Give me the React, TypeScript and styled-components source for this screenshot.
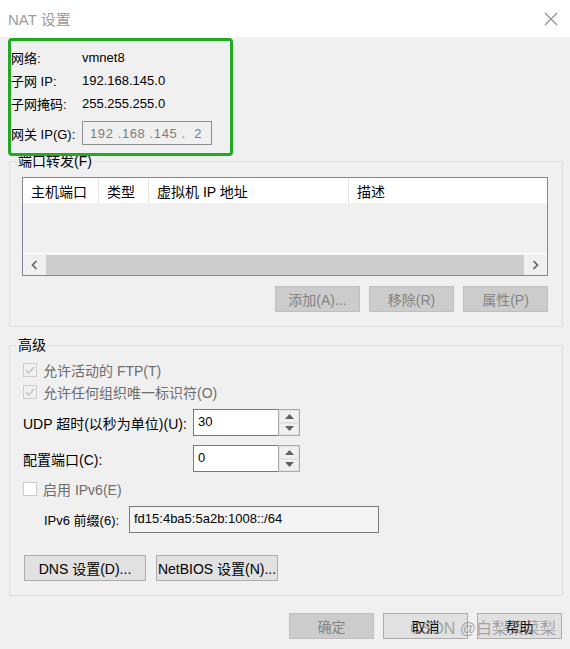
import React from 'react';
import styled, {createGlobalStyle} from 'styled-components';

const GlobalStyle = createGlobalStyle`
    html, body {
        margin: 0;
        padding: 0;
    }
    body {
        font-family: "Liberation Sans", "Noto Sans CJK SC", sans-serif;
        font-size: 13px;
        color: #000;
    }
`;

const columns = [
    {title: '主机端口', width: 76},
    {title: '类型', width: 50},
    {title: '虚拟机 IP 地址', width: 200},
    {title: '描述', width: 0},
];

const App = () => {
    return (
        <Window>
            <GlobalStyle/>
            <TitleBar>
                <Title>{'NAT 设置'}</Title>
                <CloseIcon width='14' height='14' viewBox='0 0 14 14'>
                    <path d='M1 1L13 13M13 1L1 13' stroke='#8a8a8a' strokeWidth='1.1'/>
                </CloseIcon>
            </TitleBar>
            <Body>
                <InfoSection>
                    <InfoRow>
                        <InfoLabel>{'网络:'}</InfoLabel>
                        <InfoValue>{'vmnet8'}</InfoValue>
                    </InfoRow>
                    <InfoRow>
                        <InfoLabel>{'子网 IP:'}</InfoLabel>
                        <InfoValue>{'192.168.145.0'}</InfoValue>
                    </InfoRow>
                    <InfoRow>
                        <InfoLabel>{'子网掩码:'}</InfoLabel>
                        <InfoValue>{'255.255.255.0'}</InfoValue>
                    </InfoRow>
                    <GatewayRow>
                        <InfoLabel>{'网关 IP(G):'}</InfoLabel>
                        <IpBox>{'192 .168 .145 .  2'}</IpBox>
                    </GatewayRow>
                </InfoSection>

                <Group $top={8}>
                    <Legend>{'端口转发(F)'}</Legend>
                    <GroupInner>
                        <Table>
                            <TableHeader>
                                {columns.map((c) => (
                                    <HeaderCell
                                        key={c.title}
                                        $width={c.width}
                                    >
                                        {c.title}
                                    </HeaderCell>
                                ))}
                            </TableHeader>
                            <TableBody/>
                            <HScroll>
                                <ScrollArrow>
                                    <svg width='7' height='10' viewBox='0 0 7 10'>
                                        <path d='M5.5 1L1.5 5L5.5 9' stroke='#606060' strokeWidth='1.6' fill='none'/>
                                    </svg>
                                </ScrollArrow>
                                <ScrollThumb/>
                                <ScrollArrow>
                                    <svg width='7' height='10' viewBox='0 0 7 10'>
                                        <path d='M1.5 1L5.5 5L1.5 9' stroke='#606060' strokeWidth='1.6' fill='none'/>
                                    </svg>
                                </ScrollArrow>
                            </HScroll>
                        </Table>
                        <ButtonRow>
                            <Button $disabled={true}>{'添加(A)...'}</Button>
                            <Button $disabled={true}>{'移除(R)'}</Button>
                            <Button $disabled={true}>{'属性(P)'}</Button>
                        </ButtonRow>
                    </GroupInner>
                </Group>

                <Group $top={10}>
                    <Legend>{'高级'}</Legend>
                    <GroupInner $left={13}>
                        <CheckRow>
                            <CheckBox $checked={true}>
                                <CheckMark/>
                            </CheckBox>
                            <CheckLabel>{'允许活动的 FTP(T)'}</CheckLabel>
                        </CheckRow>
                        <CheckRow>
                            <CheckBox $checked={true}>
                                <CheckMark/>
                            </CheckBox>
                            <CheckLabel>{'允许任何组织唯一标识符(O)'}</CheckLabel>
                        </CheckRow>
                        <FieldRow $top={6}>
                            <FieldLabel>{'UDP 超时(以秒为单位)(U):'}</FieldLabel>
                            <SpinBox value='30'/>
                        </FieldRow>
                        <FieldRow $top={9}>
                            <FieldLabel>{'配置端口(C):'}</FieldLabel>
                            <SpinBox value='0'/>
                        </FieldRow>
                        <CheckRow $top={6}>
                            <CheckBox $checked={false}/>
                            <CheckLabel>{'启用 IPv6(E)'}</CheckLabel>
                        </CheckRow>
                        <PrefixRow>
                            <PrefixLabel>{'IPv6 前缀(6):'}</PrefixLabel>
                            <PrefixInput>{'fd15:4ba5:5a2b:1008::/64'}</PrefixInput>
                        </PrefixRow>
                        <SettingsRow>
                            <Button $width={122}>{'DNS 设置(D)...'}</Button>
                            <Button $width={122}>{'NetBIOS 设置(N)...'}</Button>
                        </SettingsRow>
                    </GroupInner>
                </Group>

                <Footer>
                    <Button $disabled={true}>{'确定'}</Button>
                    <Button>{'取消'}</Button>
                    <Button>{'帮助'}</Button>
                </Footer>

                <Highlight/>
                <Watermark>{'CSDN @白梨菜菜梨'}</Watermark>
            </Body>
        </Window>
    );
};

const CheckMark = () => (
    <svg width='12' height='12' viewBox='0 0 12 12'>
        <path d='M2 6.2L4.8 9L10 3' stroke='#c4c4c4' strokeWidth='1.4' fill='none'/>
    </svg>
);

const SpinBox = ({value}: {value: string}) => (
    <Spin>
        <SpinInput>{value}</SpinInput>
        <SpinButtons>
            <SpinButton>
                <svg width='9' height='5' viewBox='0 0 9 5'>
                    <path d='M0 5L4.5 0L9 5Z' fill='#606060'/>
                </svg>
            </SpinButton>
            <SpinButton>
                <svg width='9' height='5' viewBox='0 0 9 5'>
                    <path d='M0 0L4.5 5L9 0Z' fill='#606060'/>
                </svg>
            </SpinButton>
        </SpinButtons>
    </Spin>
);

const Window = styled.div`
    width: 570px;
    height: 649px;
    display: flex;
    flex-direction: column;
    overflow: hidden;
`;

const TitleBar = styled.div`
    height: 37px;
    flex-shrink: 0;
    background: #fff;
    display: flex;
    align-items: center;
    justify-content: space-between;
    padding: 0 12px 0 8px;
    box-sizing: border-box;
`;

const Title = styled.div`
    font-size: 15px;
    color: #9c9c9c;
`;

const CloseIcon = styled.svg`
    display: block;
`;

const Body = styled.div`
    flex: 1;
    position: relative;
    background: #f0f0f0;
    display: flex;
    flex-direction: column;
`;

const InfoSection = styled.div`
    padding: 9px 0 0 11px;
    display: flex;
    flex-direction: column;
`;

const InfoRow = styled.div`
    height: 23px;
    display: flex;
    align-items: center;
`;

const GatewayRow = styled(InfoRow)`
    height: 24px;
    margin-top: 6px;
`;

const InfoLabel = styled.div`
    width: 71px;
    font-size: 13px;
`;

const InfoValue = styled.div`
    font-size: 13px;
`;

const IpBox = styled.div`
    width: 130px;
    height: 24px;
    box-sizing: border-box;
    border: 1px solid #8e8e8e;
    padding-left: 7px;
    display: flex;
    align-items: center;
    color: #7c7c7c;
    font-size: 13px;
    letter-spacing: 0.6px;
    white-space: pre;
`;

const Highlight = styled.div`
    position: absolute;
    left: 8px;
    top: 1px;
    width: 225px;
    height: 118px;
    box-sizing: border-box;
    border: 3px solid #22a922;
    border-radius: 4px;
    pointer-events: none;
`;

const Group = styled.fieldset<{$top: number}>`
    margin: ${(p) => p.$top}px 7px 0 9px;
    padding: 0;
    border: 1px solid #dcdcdc;
    min-width: 0;
`;

const Legend = styled.legend`
    margin-left: 6px;
    padding: 0 2px;
    font-size: 14px;
    line-height: 16px;
`;

const GroupInner = styled.div<{$left?: number}>`
    padding: ${(p) => (p.$left ? 6 : 8)}px 14px 14px ${(p) => p.$left ?? 12}px;
    display: flex;
    flex-direction: column;
    font-size: 14px;
`;

const Table = styled.div`
    height: 99px;
    box-sizing: border-box;
    border: 1px solid #828790;
    background: #f0f0f0;
    display: flex;
    flex-direction: column;
`;

const TableHeader = styled.div`
    height: 25px;
    background: #fff;
    display: flex;
`;

const HeaderCell = styled.div<{$width: number}>`
    ${(p) => (p.$width ? `width: ${p.$width}px; border-right: 1px solid #e5e5e5;` : 'flex: 1;')}
    padding-left: 8px;
    box-sizing: border-box;
    display: flex;
    align-items: center;
    font-size: 14px;
`;

const TableBody = styled.div`
    flex: 1;
    border-bottom: 1px solid #fff;
`;

const HScroll = styled.div`
    height: 21px;
    display: flex;
    align-items: center;
    background: #f0f0f0;
`;

const ScrollArrow = styled.div`
    width: 23px;
    height: 100%;
    display: flex;
    align-items: center;
    justify-content: center;

    svg {
        display: block;
    }
`;

const ScrollThumb = styled.div`
    flex: 1;
    height: 20px;
    background: #cdcdcd;
`;

const ButtonRow = styled.div`
    margin-top: 10px;
    display: flex;
    justify-content: flex-end;
    gap: 9px;
`;

const Button = styled.button<{$disabled?: boolean; $width?: number}>`
    width: ${(p) => p.$width ?? 85}px;
    height: 26px;
    box-sizing: border-box;
    padding: 0;
    border: 1px solid ${(p) => (p.$disabled ? '#bfbfbf' : '#adadad')};
    background: ${(p) => (p.$disabled ? '#cccccc' : '#e1e1e1')};
    color: ${(p) => (p.$disabled ? '#838383' : '#000')};
    font-family: "Liberation Sans", "Noto Sans CJK SC", sans-serif;
    font-size: 14px;
`;

const CheckRow = styled.div<{$top?: number}>`
    height: 22px;
    margin-top: ${(p) => p.$top ?? 0}px;
    display: flex;
    align-items: center;
    gap: 6px;
`;

const CheckBox = styled.div<{$checked: boolean}>`
    width: 14px;
    height: 14px;
    box-sizing: border-box;
    border: 1px solid #cccccc;
    background: ${(p) => (p.$checked ? '#f0f0f0' : '#fff')};
    display: flex;
    align-items: center;
    justify-content: center;

    svg {
        display: block;
    }
`;

const CheckLabel = styled.div`
    color: #6d6d6d;
`;

const FieldRow = styled.div<{$top: number}>`
    margin-top: ${(p) => p.$top}px;
    display: flex;
    align-items: center;
`;

const FieldLabel = styled.div`
    width: 170px;
`;

const Spin = styled.div`
    width: 107px;
    height: 27px;
    display: flex;
`;

const SpinInput = styled.div`
    flex: 1;
    box-sizing: border-box;
    border: 1px solid #7a7a7a;
    border-right: none;
    background: #fff;
    padding: 0 0 2px 4px;
    display: flex;
    align-items: center;
    font-size: 13px;
`;

const SpinButtons = styled.div`
    width: 22px;
    box-sizing: border-box;
    border: 1px solid #acacac;
    display: flex;
    flex-direction: column;
    background: #f0f0f0;
`;

const SpinButton = styled.div`
    flex: 1;
    border: 1px solid #e2e2e2;
    display: flex;
    align-items: center;
    justify-content: center;

    svg {
        display: block;
    }
`;

const PrefixRow = styled.div`
    margin-top: 6px;
    padding-left: 21px;
    display: flex;
    align-items: center;
`;

const PrefixLabel = styled.div`
    width: 85px;
    font-size: 13px;
`;

const PrefixInput = styled.div`
    width: 250px;
    height: 27px;
    box-sizing: border-box;
    border: 1px solid #7a7a7a;
    background: #f4f4f4;
    padding: 0 0 3px 4px;
    display: flex;
    align-items: center;
    font-size: 13px;
`;

const SettingsRow = styled.div`
    margin-top: 22px;
    margin-left: 1px;
    display: flex;
    gap: 10px;
`;

const Footer = styled.div`
    margin-top: 17px;
    padding-right: 8px;
    display: flex;
    justify-content: flex-end;
    gap: 9px;
`;

const Watermark = styled.div`
    position: absolute;
    right: 14px;
    bottom: 10px;
    font-size: 16px;
    color: rgba(120, 120, 120, 0.6);
    pointer-events: none;
`;

export default App;
